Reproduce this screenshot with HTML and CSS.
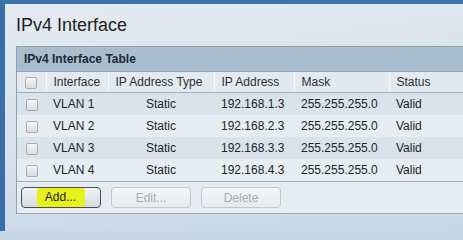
FILE: index.html
```html
<!DOCTYPE html>
<html>
<head>
<meta charset="utf-8">
<link rel="stylesheet" href="styles.css">
</head>
<body>
<div class="frame">
  <div class="page">
    <h1 class="title">IPv4 Interface</h1>
    <div class="panel">
      <div class="panel-head">IPv4 Interface Table</div>
      <table class="grid">
        <colgroup>
          <col class="c-chk"><col class="c-if"><col class="c-type"><col class="c-ip"><col class="c-mask"><col class="c-status">
        </colgroup>
        <thead>
          <tr>
            <th class="chk"><span class="box"></span></th>
            <th>Interface</th>
            <th>IP Address Type</th>
            <th>IP Address</th>
            <th>Mask</th>
            <th>Status</th>
          </tr>
        </thead>
        <tbody>
          <tr class="odd"><td class="chk"><span class="box"></span></td><td>VLAN 1</td><td class="ctr">Static</td><td>192.168.1.3</td><td>255.255.255.0</td><td>Valid</td></tr>
          <tr class="even"><td class="chk"><span class="box"></span></td><td>VLAN 2</td><td class="ctr">Static</td><td>192.168.2.3</td><td>255.255.255.0</td><td>Valid</td></tr>
          <tr class="odd"><td class="chk"><span class="box"></span></td><td>VLAN 3</td><td class="ctr">Static</td><td>192.168.3.3</td><td>255.255.255.0</td><td>Valid</td></tr>
          <tr class="even"><td class="chk"><span class="box"></span></td><td>VLAN 4</td><td class="ctr">Static</td><td>192.168.4.3</td><td>255.255.255.0</td><td>Valid</td></tr>
        </tbody>
      </table>
      <div class="actions">
        <button class="btn primary"><span class="hl">Add...</span></button>
        <button class="btn disabled">Edit...</button>
        <button class="btn disabled">Delete</button>
      </div>
    </div>
  </div>
</div>
</body>
</html>
```
FILE: styles.css
```css
html, body {
  margin: 0;
  padding: 0;
  width: 463px;
  height: 231px;
  overflow: hidden;
}
body {
  font-family: "Liberation Sans", Arial, sans-serif;
  background: #c9d8e6;
}
.frame {
  height: 227px;
  border-top: 4px solid #3e72ab;
  border-left: 5px solid #3a6ea8;
  background: linear-gradient(172deg, #e4ebf2 0%, #dce5ee 30%, #d2dfea 60%, #c8d8e6 100%);
  overflow: hidden;
}
.page {
  padding: 10px 0 0 11px;
}
.title {
  margin: 0 0 10px 0;
  font-size: 18px;
  line-height: 22px;
  font-weight: normal;
  color: #1e1e1e;
}
.panel {
  width: 470px;
  border-left: 1px solid #8ea2b2;
  border-top: 1px solid #8ea2b2;
  border-bottom: 1px solid #98aab8;
  background: #e5ecf2;
}
.panel-head {
  height: 24px;
  line-height: 24px;
  padding-left: 7px;
  background: #a9bdcc;
  font-size: 12px;
  font-weight: bold;
  color: #1c2a38;
  border-bottom: 1px solid #93a7b6;
}
.grid {
  border-collapse: collapse;
  table-layout: fixed;
  width: 470px;
  font-size: 12px;
}
.c-chk { width: 29px; }
.c-if { width: 62px; }
.c-type { width: 106px; }
.c-ip { width: 80px; }
.c-mask { width: 95px; }
.c-status { width: 98px; }
.grid th {
  height: 20px;
  padding: 0 0 0 7px;
  text-align: left;
  font-weight: normal;
  color: #2a2f35;
  background: #e2e9ef;
  border-left: 1px solid #f6f9fb;
  border-bottom: 1px solid #9fb0bd;
  white-space: nowrap;
}
.grid th:first-child { border-left: none; }
.grid td {
  height: 22px;
  padding: 0 0 0 7px;
  color: #1f2327;
  white-space: nowrap;
}
.grid .chk { padding: 0; text-align: center; }
.grid td.ctr { text-align: center; padding: 0; }
.odd td { background: #d8e3ec; }
.even td { background: #e6edf2; }
.box {
  display: inline-block;
  width: 10px;
  height: 10px;
  vertical-align: middle;
  border: 1px solid #a9adb2;
  border-radius: 2px;
  background: linear-gradient(#f7f7f7, #d9dbdd);
}
.actions {
  display: flex;
  gap: 10px;
  height: 31px;
  align-items: center;
  padding-left: 4px;
  border-top: 1px solid #9fb0bd;
  background: #e5ecf2;
}
.btn {
  width: 80px;
  height: 21px;
  padding: 0;
  border-radius: 4px;
  font-family: "Liberation Sans", Arial, sans-serif;
  font-size: 12px;
  display: flex;
  align-items: center;
  justify-content: center;
}
.primary {
  border: 1px solid #4b4f53;
  background: linear-gradient(#f3f4f5, #d5dadf);
  color: #1d2024;
}
.hl {
  background: #e7f11c;
  padding: 2px 9px 3px 8px;
  border-radius: 2px;
}
.disabled {
  border: 1px solid #c3c8cc;
  background: linear-gradient(#f4f6f7, #e6eaed);
  color: #a7abae;
}
```
